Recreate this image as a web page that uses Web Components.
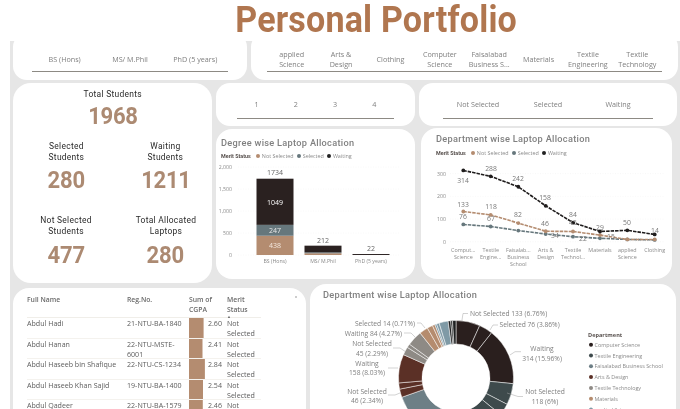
<!DOCTYPE html>
<html>
<head>
<meta charset="utf-8">
<title>Personal Portfolio</title>
<style>
  html, body { margin: 0; background: #fff; overflow: hidden; }
  body { width: 680px; height: 409px; font-family: "Open Sans", sans-serif; filter: blur(.4px); }
</style>
</head>
<body>
<report-title>Personal Portfolio</report-title>
<report-board>
  <tab-slicer slot="top" style="width:234px" pad="19" gap="8" row="24" items="BS (Hons)|MS/ M.Phil|PhD (5 years)"></tab-slicer>
  <tab-slicer slot="top" style="width:427px" pad="16" gap="8" row="24" items="applied Science|Arts &amp; Design|Clothing|Computer Science|Faisalabad Business S...|Materials|Textile Engineering|Textile Technology"></tab-slicer>
  <kpi-panel slot="kpi"></kpi-panel>
  <tab-slicer slot="strip" style="width:199px;height:43px" pad="21" gap="7" row="28" items="1|2|3|4"></tab-slicer>
  <tab-slicer slot="strip" style="width:258px;height:43px" pad="24" gap="7" row="28" items="Not Selected|Selected|Waiting"></tab-slicer>
  <degree-chart slot="chart"></degree-chart>
  <dept-line-chart slot="chart"></dept-line-chart>
  <student-table slot="bottom"></student-table>
  <dept-donut slot="bottom"></dept-donut>
</report-board>

<script>
const GREY_TEXT = '#7f7f7f';
const TAN = '#b48c70', SLATE = '#66777c', DARK = '#2a2120';

class ReportTitle extends HTMLElement {
  constructor() {
    super();
    this.attachShadow({ mode: 'open' });
    this.shadowRoot.innerHTML = `
    <style>
      :host { display: flex; justify-content: center; height: 41px; padding-left: 73px; box-sizing: border-box; }
      h1 {
        margin: 0;
        font: 700 37px/40px Roboto, sans-serif;
        color: #b0764f;
        transform: scaleX(.92);
        letter-spacing: .2px;
        white-space: nowrap;
      }
    </style>
    <h1><slot></slot></h1>`;
  }
}

class ReportBoard extends HTMLElement {
  constructor() {
    super();
    this.attachShadow({ mode: 'open' });
    this.shadowRoot.innerHTML = `
    <style>
      :host { display: block; margin-left: 10px; height: 368px; background: #e6e6e6; overflow: hidden; padding: 0 3px; box-sizing: border-box; }
      .top { display: flex; gap: 4px; height: 39px; align-items: flex-end; margin-bottom: 3px; }
      .middle { display: flex; gap: 4px; height: 201px; }
      .right { display: flex; flex-direction: column; gap: 3px; }
      .strip, .chart { display: flex; gap: 4px; }
      .chart { gap: 6px; margin-top: -1px; }
      .bottom { display: flex; gap: 4px; }
    </style>
    <div class="top"><slot name="top"></slot></div>
    <div class="middle">
      <slot name="kpi"></slot>
      <div class="right">
        <div class="strip"><slot name="strip"></slot></div>
        <div class="chart"><slot name="chart"></slot></div>
      </div>
    </div>
    <div class="bottom"><slot name="bottom"></slot></div>`;
  }
}

// row of slicer buttons sitting on one underline
class TabSlicer extends HTMLElement {
  constructor() {
    super();
    this.attachShadow({ mode: 'open' });
  }
  connectedCallback() {
    const items = this.getAttribute('items').split('|');
    const pad = this.getAttribute('pad') || 15;
    const gap = this.getAttribute('gap') || 8;
    const row = this.getAttribute('row') || 24;
    this.shadowRoot.innerHTML = `
    <style>
      :host { display: flex; flex: none; height: 47px; box-sizing: border-box; background: #fff; border-radius: 14px; padding: 0 ${pad}px ${gap}px; align-items: flex-end; }
      .row { flex: 1; display: flex; border-bottom: 1px solid #8d8a84; height: ${row}px; }
      .row span { flex: 1 1 0; min-width: 0; display: flex; align-items: center; justify-content: center; text-align: center;
        font: 400 7.2px/9.8px "Open Sans", sans-serif; color: ${GREY_TEXT}; padding: 2px 4px 0; }
    </style>
    <div class="row">${items.map(t => `<span>${t.replace('&', '&amp;')}</span>`).join('')}</div>`;
  }
}

class KpiStat extends HTMLElement {
  constructor() {
    super();
    this.attachShadow({ mode: 'open' });
    this.shadowRoot.innerHTML = `
    <style>
      :host { display: flex; flex-direction: column; align-items: center; font-family: Roboto, sans-serif; }
      .label { font-size: 9.2px; line-height: 10.6px; font-weight: 400; color: #2a2a2a; text-align: center; letter-spacing: .3px; height: 22px; display: flex; align-items: center; transform: scaleX(.92); white-space: nowrap; }
      .value { font-size: 24px; line-height: 26px; font-weight: 700; color: #ac8a72; letter-spacing: -.3px; transform: scaleX(.92); margin-top: var(--value-gap, 0); }
    </style>
    <div class="label"><span><slot></slot></span></div>
    <div class="value">${this.getAttribute('value')}</div>`;
  }
}

class KpiPanel extends HTMLElement {
  constructor() {
    super();
    this.attachShadow({ mode: 'open' });
    this.shadowRoot.innerHTML = `
    <style>
      :host { display: flex; flex-direction: column; width: 199px; height: 200px; flex: none; box-sizing: border-box; background: #fff; border-radius: 18px; }
      .total { margin: 0 0 11.5px; --value-gap: -2px; }
      .grid { display: grid; grid-template-columns: 100px 99px; row-gap: 22px; padding-left: 3px; --value-gap: 4.5px; }
    </style>
    <kpi-stat class="total" value="1968">Total Students</kpi-stat>
    <div class="grid">
      <kpi-stat value="280">Selected<br>Students</kpi-stat>
      <kpi-stat value="1211">Waiting<br>Students</kpi-stat>
      <kpi-stat value="477">Not Selected<br>Students</kpi-stat>
      <kpi-stat value="280">Total Allocated<br>Laptops</kpi-stat>
    </div>`;
  }
}

const chartCss = `
  .title { font: 500 9.2px/12px Roboto, sans-serif; color: #808080; letter-spacing: .3px; white-space: nowrap; }
  .legend { display: flex; align-items: center; gap: 2px; font: 400 5.4px/8px "Open Sans", sans-serif; color: #8a8a8a; white-space: nowrap; }
  .legend b { color: #5a5350; margin-right: 2px; font-family: Roboto, sans-serif; }
  .legend i { width: 4px; height: 4px; border-radius: 50%; margin-left: 1px; }
  svg { display: block; }
  svg text { font-family: "Open Sans", sans-serif; }
`;
const legendHtml = `<b>Merit Status</b><i style="background:${TAN}"></i>Not Selected<i style="background:${SLATE}"></i>Selected<i style="background:#222"></i>Waiting`;

class DegreeChart extends HTMLElement {
  constructor() {
    super();
    this.attachShadow({ mode: 'open' });
    const scale = v => 255 - v * 0.044;
    const ticks = [[0, '0'], [500, '500'], [1000, '1,000'], [1500, '1,500'], [2000, '2,000']];
    const stack = (x, parts) => {
      let acc = 0, out = '';
      for (const [v, c] of parts) {
        out += `<rect x="${x}" y="${scale(acc + v)}" width="37" height="${v * 0.044}" fill="${c}"/>`;
        acc += v;
      }
      return out;
    };
    this.shadowRoot.innerHTML = `
    <style>
      :host { display: block; flex: none; width: 199px; height: 150px; margin-top: 1px; box-sizing: border-box; background: #fff; border-radius: 16px; padding: 8px 0 0 5px; }
      ${chartCss}
      svg { margin: 1px 0 0 -5px; }
    </style>
    <div class="title">Degree wise Laptop Allocation</div>
    <div class="legend" style="margin-top:3px">${legendHtml}</div>
    <svg width="199" height="118" viewBox="216 161 199 118">
      ${ticks.map(([v, l]) => `<line x1="238" x2="400" y1="${scale(v)}" y2="${scale(v)}" stroke="#f1f1f1" stroke-width=".5" stroke-dasharray="1 1.5"/>
        <text x="232" y="${scale(v) + 2}" font-size="5.2" fill="#8a8a8a" text-anchor="end">${l}</text>`).join('')}
      ${stack(256.5, [[438, TAN], [247, SLATE], [1049, DARK]])}
      ${stack(304.5, [[40, TAN], [20, SLATE], [152, DARK]])}
      ${stack(352.5, [[22, DARK]])}
      <g font-size="7" text-anchor="middle">
        <text x="275" y="175" fill="#666">1734</text>
        <text x="323" y="243" fill="#666">212</text>
        <text x="371" y="251" fill="#666">22</text>
        <text x="275" y="205" fill="#fff">1049</text>
        <text x="275" y="233" fill="#e8e8e8">247</text>
        <text x="275" y="248" fill="#f3e7dd">438</text>
      </g>
      <g font-size="5.2" fill="#8a8a8a" text-anchor="middle">
        <text x="275" y="262.5">BS (Hons)</text>
        <text x="323" y="262.5">MS/ M.Phil</text>
        <text x="371" y="262.5">PhD (5 years)</text>
      </g>
    </svg>`;
  }
}

class DeptLineChart extends HTMLElement {
  constructor() {
    super();
    this.attachShadow({ mode: 'open' });
    const xs = [463.3, 490.7, 518.3, 545.7, 573, 600, 627.3, 654.7];
    const y = v => 241.7 - v * 0.227;
    const series = [
      { c: SLATE, d: [76, 67, 49, 34, 22, 15, 10, 8], lab: [[0, 76, 463, 219], [1, 67, 491, 221], [3, 34, 555, 238], [4, 22, 583, 241], [5, 15, 611, 239]] },
      { c: TAN, d: [133, 118, 82, 46, 45, 29, 10, 10], lab: [[0, 133, 463, 207], [1, 118, 491, 209], [2, 82, 518, 217], [3, 46, 545, 226], [4, 45, 573, 225]] },
      { c: '#1f1c1c', d: [314, 288, 242, 158, 84, 45, 50, 32], lab: [[0, 314, 463, 183], [1, 288, 491, 171], [2, 242, 518, 181], [3, 158, 545, 200], [4, 84, 573, 217], [5, 29, 600, 230], [6, 50, 627, 225], [7, 14, 655, 233]] }
    ];
    const cats = [['Comput...', 'Science'], ['Textile', 'Engine...'], ['Faisalab...', 'Business', 'School'], ['Arts &amp;', 'Design'], ['Textile', 'Technol...'], ['Materials'], ['applied', 'Science'], ['Clothing']];
    const lines = series.map(s => `
      <polyline points="${s.d.map((v, i) => xs[i] + ',' + y(v)).join(' ')}" fill="none" stroke="${s.c}" stroke-width="1.6" stroke-dasharray="3.5 1"/>
      ${s.d.map((v, i) => `<circle cx="${xs[i]}" cy="${y(v)}" r="1.9" fill="${s.c}"/>`).join('')}`).join('');
    const labels = series.map(s => s.lab.map(l => `<text x="${l[2]}" y="${l[3]}">${l[1]}</text>`).join('')).join('');
    this.shadowRoot.innerHTML = `
    <style>
      :host { display: block; flex: none; width: 251px; height: 151px; box-sizing: border-box; background: #fff; border-radius: 16px; padding: 5px 0 0 15px; }
      ${chartCss}
      svg { margin: 2px 0 0 -15px; }
    </style>
    <div class="title">Department wise Laptop Allocation</div>
    <div class="legend" style="margin-top:4px">${legendHtml}</div>
    <svg width="251" height="120" viewBox="421 159 251 120">
      ${[0, 100, 200, 300].map(v => `<line x1="450" x2="664" y1="${y(v)}" y2="${y(v)}" stroke="#f1f1f1" stroke-width=".5" stroke-dasharray="1 1.5"/>
        <text x="446" y="${y(v) + 2}" font-size="5.2" fill="#8a8a8a" text-anchor="end">${v}</text>`).join('')}
      ${lines}
      <g font-size="6.8" fill="#777" text-anchor="middle">${labels}</g>
      <g font-size="5.4" fill="#8a8a8a" text-anchor="middle">
        ${cats.map((c, i) => c.map((t, j) => `<text x="${xs[i]}" y="${252 + j * 6.9}">${t}</text>`).join('')).join('')}
      </g>
    </svg>`;
  }
}

class StudentTable extends HTMLElement {
  constructor() {
    super();
    this.attachShadow({ mode: 'open' });
    const rows = [
      ['Abdul Hadi', '21-NTU-BA-1840', 2.60],
      ['Abdul Hanan', '22-NTU-MSTE-6001', 2.41],
      ['Abdul Haseeb bin Shafique', '22-NTU-CS-1234', 2.84],
      ['Abdul Haseeb Khan Sajid', '19-NTU-BA-1400', 2.54],
      ['Abdul Qadeer', '22-NTU-BA-1579', 2.46]
    ];
    this.shadowRoot.innerHTML = `
    <style>
      :host { display: block; flex: none; width: 293px; height: 125px; margin-top: 4px; box-sizing: border-box; background: #fff; border-radius: 16px 16px 0 0; padding: 7px 0 0 14px; position: relative; overflow: hidden; font: 400 7.1px/10.2px "Open Sans", sans-serif; color: #5c5c5c; }
      .dot { position: absolute; right: 9px; top: 8px; width: 2px; height: 2px; border-radius: 50%; background: #bdbdbd; }
      .grid { display: grid; grid-template-columns: 100px 62px 38px 34px; width: 234px; }
      .h { font-weight: 600; color: #6a6a6a; font-size: 6.8px; height: 22px; border-bottom: 1px solid #f0eee9; }
      .h small { display: block; font-size: 4px; line-height: 3px; }
      .c { height: 20.6px; box-sizing: border-box; border-bottom: 1px solid #f4f2ee; overflow: hidden; }
      .v { text-align: right; padding-right: 5px; background-repeat: no-repeat; background-image: linear-gradient(${TAN}, ${TAN}); background-position: left top; box-sizing: border-box; }
    </style>
    <span class="dot"></span>
    <div class="grid">
      <div class="h">Full Name</div><div class="h">Reg.No.</div><div class="h">Sum of<br>CGPA</div><div class="h">Merit<br>Status<small>&#9650;</small></div>
      ${rows.map(r => `<div class="c">${r[0]}</div><div class="c">${r[1]}</div>
        <div class="c v" style="background-size:${(r[2] * 5.6).toFixed(1)}px 100%">${r[2].toFixed(2)}</div><div class="c">Not<br>Selected</div>`).join('')}
    </div>`;
  }
}

class DeptDonut extends HTMLElement {
  constructor() {
    super();
    this.attachShadow({ mode: 'open' });
    const depts = [
      ['Computer Science', '#2a1f1e', [133, 76, 314]],
      ['Textile Engineering', '#3e4a4c', [118, 67, 288]],
      ['Faisalabad Business School', '#6d7f86', [82, 49, 242]],
      ['Arts &amp; Design', '#5b3026', [46, 34, 158]],
      ['Textile Technology', '#8e8a85', [45, 21, 84]],
      ['Materials', '#b58c6e', [48, 31, 14]],
      ['applied Science', '#7f9aa6', [10, 15, 50]],
      ['Clothing', '#1f2021', [14, 10, 19]]
    ];
    const cx = 456, cy = 378, R = 57.5, r = 34;
    const pt = (rad, a) => `${(cx + rad * Math.sin(a)).toFixed(2)} ${(cy - rad * Math.cos(a)).toFixed(2)}`;
    let acc = 0, arcs = '';
    for (const [, color, parts] of depts) {
      for (const v of parts) {
        const a0 = acc / 1968 * Math.PI * 2;
        acc += v;
        const a1 = acc / 1968 * Math.PI * 2;
        const big = a1 - a0 > Math.PI ? 1 : 0;
        arcs += `<path d="M${pt(R, a0)}A${R} ${R} 0 ${big} 1 ${pt(R, a1)}L${pt(r, a1)}A${r} ${r} 0 ${big} 0 ${pt(r, a0)}Z" fill="${color}" stroke="#fff" stroke-width=".5"/>`;
      }
    }
    const leaders = ['462,320 463,313.5 468,313.5', '490,330 493,325 498,325', '510,355 515,351.7 521,351.7', '507,393 518,396.5 523,396.5',
      '417,323 421,323 425,328', '404,333 411,333 415,337', '393,348 400,348 406,352', '388,368 398,368', '388,395 395,395 400,393'];
    const texts = [
      [470, 316, 'start', 'Not Selected 133 (6.76%)'], [499.5, 327, 'start', 'Selected 76 (3.86%)'],
      [542, 351, 'middle', 'Waiting'], [542, 360.5, 'middle', '314 (15.96%)'],
      [545, 394, 'middle', 'Not Selected'], [545, 403.5, 'middle', '118 (6%)'],
      [415, 326, 'end', 'Selected 14 (0.71%)'], [402, 336, 'end', 'Waiting 84 (4.27%)'],
      [372, 346, 'middle', 'Not Selected'], [372, 355.5, 'middle', '45 (2.29%)'],
      [367, 365.5, 'middle', 'Waiting'], [367, 375, 'middle', '158 (8.03%)'],
      [367, 393.5, 'middle', 'Not Selected'], [367, 403, 'middle', '46 (2.34%)']
    ];
    this.shadowRoot.innerHTML = `
    <style>
      :host { display: block; flex: none; width: 366px; height: 125px; box-sizing: border-box; background: #fff; border-radius: 16px 16px 0 0; padding: 5px 0 0 13px; overflow: hidden; }
      ${chartCss}
      svg { margin: -1px 0 0 -13px; }
    </style>
    <div class="title">Department wise Laptop Allocation</div>
    <svg width="366" height="109" viewBox="310 300 366 109">
      ${arcs}
      <g fill="none" stroke="#a5a5a5" stroke-width=".5">${leaders.map(p => `<polyline points="${p}"/>`).join('')}</g>
      <g font-size="6.7" fill="#7f7f7f">${texts.map(t => `<text x="${t[0]}" y="${t[1]}" text-anchor="${t[2]}">${t[3]}</text>`).join('')}</g>
      <text x="588" y="337" font-size="5.6" font-weight="700" fill="#5a5350">Department</text>
      ${depts.slice(0, 7).map((d, i) => `<circle cx="591" cy="${344.7 + i * 10.8}" r="2" fill="${d[1]}"/>
        <text x="594.5" y="${346.7 + i * 10.8}" font-size="5.4" fill="#8a8a8a">${d[0]}</text>`).join('')}
    </svg>`;
  }
}

customElements.define('report-title', ReportTitle);
customElements.define('report-board', ReportBoard);
customElements.define('tab-slicer', TabSlicer);
customElements.define('kpi-stat', KpiStat);
customElements.define('kpi-panel', KpiPanel);
customElements.define('degree-chart', DegreeChart);
customElements.define('dept-line-chart', DeptLineChart);
customElements.define('student-table', StudentTable);
customElements.define('dept-donut', DeptDonut);
</script>
</body>
</html>
